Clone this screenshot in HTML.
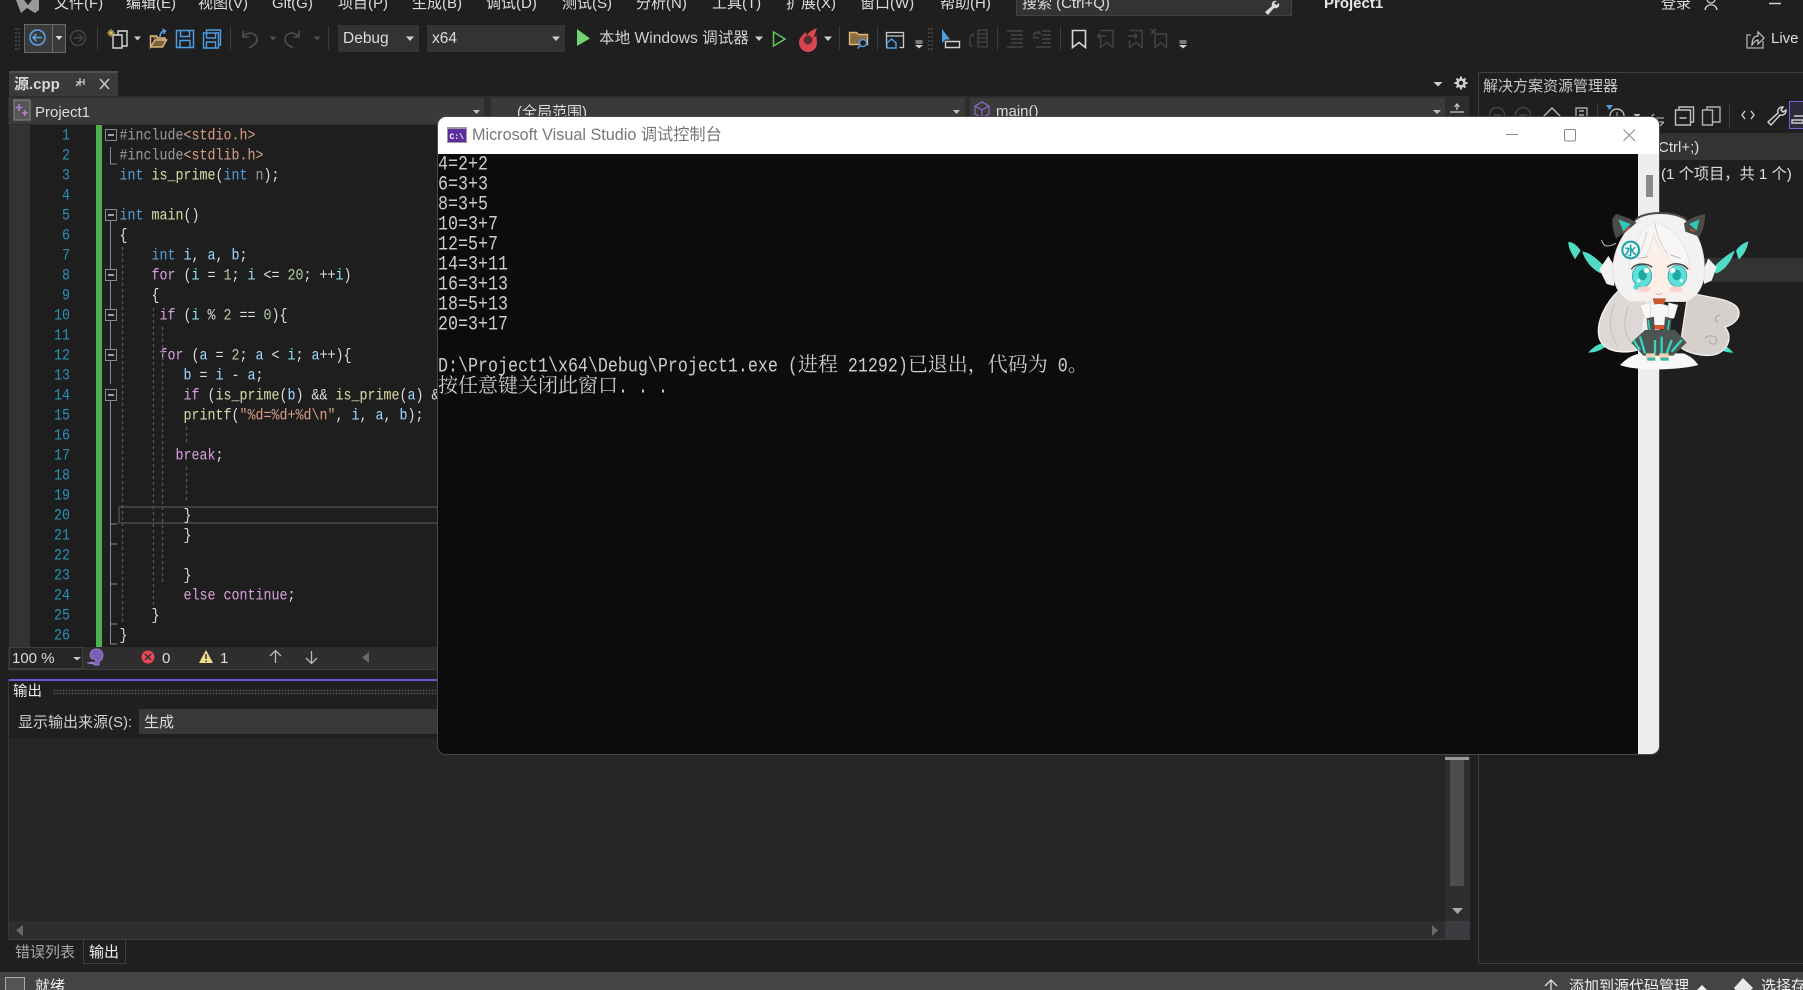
<!DOCTYPE html>
<html lang="zh-CN"><head><meta charset="utf-8"><title>Visual Studio</title>
<style>
html,body{margin:0;padding:0;background:#1f1f1f}
#p{position:relative;width:1803px;height:990px;overflow:hidden;background:#1f1f1f;font-family:"Liberation Sans","Noto Sans CJK SC",sans-serif;font-size:15px;color:#dcdcdc}
.t{position:absolute;white-space:nowrap;line-height:20px}
.b{position:absolute}
.c{position:absolute;left:119.5px;margin-top:2px;white-space:pre;font-family:"Liberation Mono","Noto Sans CJK SC",monospace;font-size:13.33px;line-height:20px;height:20px;color:#dcdcdc;transform:scaleY(1.15)}
.n{position:absolute;right:1733px;margin-top:2px;font-family:"Liberation Mono",monospace;font-size:13.33px;line-height:20px;color:#2b91af;transform:scaleY(1.15)}
.k{color:#569cd6}.f{color:#dcdcaa}.w{color:#d8a0df}.v{color:#9cdcfe}.u{color:#b5cea8}.s{color:#d69d85}.g{color:#9b9b9b}
#con{position:absolute;left:438px;top:117px;width:1221px;height:637px;background:#0c0c0c;border-radius:8px;overflow:hidden;box-shadow:0 0 0 1px #4a4a4a}
#con .l{position:absolute;left:0;height:20px;line-height:20px;white-space:pre;color:#cccccc;font-family:"Liberation Mono",monospace;font-size:16.67px}
#con .l i{font-style:normal;display:inline-block;transform:scaleY(1.2)}
#con .l b{font-weight:400;font-family:"Noto Serif CJK SC","Noto Sans CJK SC",serif;font-size:20px;line-height:20px}
</style></head><body><div id="p">

<!-- menu -->
<div class="t" style="left:54px;top:-6px">文件(F)</div>
<div class="t" style="left:126px;top:-6px">编辑(E)</div>
<div class="t" style="left:198px;top:-6px">视图(V)</div>
<div class="t" style="left:272px;top:-6px">Git(G)</div>
<div class="t" style="left:338px;top:-6px">项目(P)</div>
<div class="t" style="left:412px;top:-6px">生成(B)</div>
<div class="t" style="left:486px;top:-6px">调试(D)</div>
<div class="t" style="left:562px;top:-6px">测试(S)</div>
<div class="t" style="left:636px;top:-6px">分析(N)</div>
<div class="t" style="left:712px;top:-6px">工具(T)</div>
<div class="t" style="left:786px;top:-6px">扩展(X)</div>
<div class="t" style="left:860px;top:-6px">窗口(W)</div>
<div class="t" style="left:940px;top:-6px">帮助(H)</div>
<div class="b" style="left:1016px;top:-2px;width:276px;height:18px;background:#333;border:1px solid #434346;box-sizing:border-box"></div>
<div class="t" style="left:1022px;top:-6px">搜索 (Ctrl+Q)</div>
<div class="t" style="left:1324px;top:-6px;font-weight:700;color:#e8e8e8">Project1</div>
<div class="t" style="left:1661px;top:-6px">登录</div>

<!-- toolbar boxes -->
<div class="b" style="left:24px;top:24px;width:42px;height:29px;background:#3a3a3a;border:1px solid #6a6a6a;box-sizing:border-box"></div>
<div class="b" style="left:338px;top:25px;width:81px;height:27px;background:#333"></div>
<div class="t" style="left:343px;top:29px;font-size:15.5px">Debug</div>
<div class="b" style="left:427px;top:25px;width:138px;height:27px;background:#333"></div>
<div class="t" style="left:432px;top:29px;font-size:15.5px">x64</div>
<div class="t" style="left:599px;top:29px;font-size:15.6px;color:#d0d0d0">本地 Windows 调试器</div>
<div class="t" style="left:1771px;top:29px">Live Share</div>

<!-- tab -->
<div class="b" style="left:9px;top:71px;width:109px;height:25px;background:#3a3a3a;border-top:2px solid #505050;box-sizing:border-box"></div>
<div class="t" style="left:14px;top:75px;font-weight:700;color:#d8d8d8">源.cpp</div>

<!-- nav bar -->
<div class="b" style="left:8px;top:96px;width:1461px;height:29px;background:#2d2d2d"></div>
<div class="b" style="left:9px;top:98px;width:475px;height:26px;background:#3a3a3a"></div>
<div class="b" style="left:491px;top:98px;width:474px;height:26px;background:#3a3a3a"></div>
<div class="b" style="left:970px;top:98px;width:475px;height:26px;background:#3a3a3a"></div>
<div class="t" style="left:35px;top:103px">Project1</div>
<div class="t" style="left:517px;top:103px">(全局范围)</div>
<div class="t" style="left:996px;top:102px">main()</div>

<!-- editor -->
<div class="b" style="left:8px;top:125px;width:1437px;height:522px;background:#1e1e1e"></div>
<div class="b" style="left:9px;top:125px;width:21px;height:522px;background:#333"></div>
<div class="b" style="left:96px;top:125px;width:6px;height:522px;background:#4caf50"></div>
<div class="b" style="left:118px;top:506px;width:1330px;height:18px;border:2px solid #3f3f3f;box-sizing:border-box"></div>

<div class="n" style="top:125px">1</div><div class="n" style="top:145px">2</div><div class="n" style="top:165px">3</div><div class="n" style="top:185px">4</div><div class="n" style="top:205px">5</div><div class="n" style="top:225px">6</div><div class="n" style="top:245px">7</div><div class="n" style="top:265px">8</div><div class="n" style="top:285px">9</div><div class="n" style="top:305px">10</div><div class="n" style="top:325px">11</div><div class="n" style="top:345px">12</div><div class="n" style="top:365px">13</div><div class="n" style="top:385px">14</div><div class="n" style="top:405px">15</div><div class="n" style="top:425px">16</div><div class="n" style="top:445px">17</div><div class="n" style="top:465px">18</div><div class="n" style="top:485px">19</div><div class="n" style="top:505px">20</div><div class="n" style="top:525px">21</div><div class="n" style="top:545px">22</div><div class="n" style="top:565px">23</div><div class="n" style="top:585px">24</div><div class="n" style="top:605px">25</div><div class="n" style="top:625px">26</div>

<div class="c" style="top:125px"><span class="g">#include</span><span class="s">&lt;stdio.h&gt;</span></div>
<div class="c" style="top:145px"><span class="g">#include</span><span class="s">&lt;stdlib.h&gt;</span></div>
<div class="c" style="top:165px"><span class="k">int</span> <span class="f">is_prime</span>(<span class="k">int</span> <span class="g">n</span>);</div>
<div class="c" style="top:205px"><span class="k">int</span> <span class="f">main</span>()</div>
<div class="c" style="top:225px">{</div>
<div class="c" style="top:245px">    <span class="k">int</span> <span class="v">i</span>, <span class="v">a</span>, <span class="v">b</span>;</div>
<div class="c" style="top:265px">    <span class="w">for</span> (<span class="v">i</span> = <span class="u">1</span>; <span class="v">i</span> &lt;= <span class="u">20</span>; ++<span class="v">i</span>)</div>
<div class="c" style="top:285px">    {</div>
<div class="c" style="top:305px">     <span class="w">if</span> (<span class="v">i</span> % <span class="u">2</span> == <span class="u">0</span>){</div>
<div class="c" style="top:345px">     <span class="w">for</span> (<span class="v">a</span> = <span class="u">2</span>; <span class="v">a</span> &lt; <span class="v">i</span>; <span class="v">a</span>++){</div>
<div class="c" style="top:365px">        <span class="v">b</span> = <span class="v">i</span> - <span class="v">a</span>;</div>
<div class="c" style="top:385px">        <span class="w">if</span> (<span class="f">is_prime</span>(<span class="v">b</span>) &amp;&amp; <span class="f">is_prime</span>(<span class="v">a</span>) &amp;&amp; <span class="v">b</span> + <span class="v">a</span> == <span class="v">i</span>){</div>
<div class="c" style="top:405px">        <span class="f">printf</span>(<span class="s">"%d=%d+%d\n"</span>, <span class="v">i</span>, <span class="v">a</span>, <span class="v">b</span>);</div>
<div class="c" style="top:445px">       <span class="w">break</span>;</div>
<div class="c" style="top:505px">        }</div>
<div class="c" style="top:525px">        }</div>
<div class="c" style="top:565px">        }</div>
<div class="c" style="top:585px">        <span class="w">else</span> <span class="w">continue</span>;</div>
<div class="c" style="top:605px">    }</div>
<div class="c" style="top:625px">}</div>

<!-- zoom strip -->
<div class="b" style="left:8px;top:647px;width:1437px;height:23px;background:#2e2e2e;border-bottom:1px solid #3f3f3f;box-sizing:border-box"></div>
<div class="b" style="left:9px;top:647px;width:74px;height:22px;background:#262626;border:1px solid #3f3f3f;box-sizing:border-box"></div>
<div class="t" style="left:12px;top:649px">100 %</div>
<div class="t" style="left:162px;top:649px">0</div>
<div class="t" style="left:220px;top:649px">1</div>

<!-- output panel -->
<div class="b" style="left:8px;top:679px;width:1462px;height:261px;background:#1f1f1f;border-left:1px solid #3a3a3a;box-sizing:border-box"></div>
<div class="b" style="left:9px;top:679px;width:1461px;height:2px;background:#6a57d5"></div>
<div class="t" style="left:13px;top:682px;font-size:14.5px;color:#e8e8e8">输出</div>
<div class="b" style="left:53px;top:689px;width:1392px;height:6px;background-image:radial-gradient(#4a4a4a 1px,transparent 1px);background-size:3px 3px"></div>
<div class="t" style="left:18px;top:713px;color:#d0d0d0">显示输出来源(S):</div>
<div class="b" style="left:139px;top:709px;width:1300px;height:25px;background:#383838"></div>
<div class="t" style="left:144px;top:713px">生成</div>
<div class="b" style="left:9px;top:738px;width:1436px;height:183px;background:#262626"></div>
<div class="b" style="left:1445px;top:738px;width:25px;height:183px;background:#2e2e2e"></div>
<div class="b" style="left:1445px;top:757px;width:24px;height:3px;background:#9a9a9a"></div>
<div class="b" style="left:1450px;top:760px;width:14px;height:126px;background:#4d4d4d"></div>
<div class="b" style="left:9px;top:921px;width:1436px;height:19px;background:#2e2e2e;border-bottom:1px solid #3f3f3f;box-sizing:border-box"></div>
<div class="b" style="left:1445px;top:921px;width:25px;height:19px;background:#3c3c40"></div>
<div class="b" style="left:83px;top:940px;width:43px;height:24px;border:1px solid #3f3f3f;border-top:0;box-sizing:border-box"></div>
<div class="t" style="left:15px;top:943px;color:#a8a8a8">错误列表</div>
<div class="t" style="left:89px;top:943px;color:#f0f0f0">输出</div>

<!-- solution explorer -->
<div class="b" style="left:1478px;top:72px;width:340px;height:892px;border:1px solid #3f3f3f;box-sizing:border-box;background:#1f1f1f"></div>
<div class="t" style="left:1483px;top:77px;color:#c8c8c8">解决方案资源管理器</div>
<div class="b" style="left:1479px;top:133px;width:324px;height:27px;background:#333"></div>
<div class="t" style="left:1658px;top:138px">Ctrl+;)</div>
<div class="t" style="left:1661px;top:165px;font-size:15.2px">(1 个项目，共 1 个)</div>
<div class="b" style="left:1479px;top:258px;width:324px;height:24px;background:#333"></div>
<div class="b" style="left:1789px;top:101px;width:14px;height:28px;background:#2c2c3c;border:1px solid #7c62d6;border-right:0;box-sizing:border-box"></div>

<!-- status bar -->
<div class="b" style="left:0;top:972px;width:1803px;height:18px;background:#444"></div>
<div class="b" style="left:5px;top:977px;width:20px;height:20px;background:#555;border:1px solid #aaa;box-sizing:border-box"></div>
<div class="t" style="left:35px;top:977px;color:#f0f0f0">就绪</div>
<div class="t" style="left:1569px;top:977px;color:#f0f0f0">添加到源代码管理</div>
<div class="t" style="left:1761px;top:977px;color:#f0f0f0">选择存储库</div>

<!-- icon layer -->
<svg class="b" style="left:0;top:0" width="1803" height="990" viewBox="0 0 1803 990" fill="none">
<!-- logo -->
<path d="M16 0 L21 13 L27 8 L35 13 L39 10 V0 H32 L28 5 L24 0 Z" fill="#9a9a9a"/>
<!-- grips -->
<path d="M16 28V50M19 28V50M929 28V50M932 28V50" stroke="#4a4a4a" stroke-width="1.500" stroke-dasharray="2 2"/>
<!-- back / forward -->
<circle cx="37.500" cy="37.500" r="7.500" stroke="#5aa5ea" stroke-width="1.500"/><path d="M42 37.500H33M36.500 34L33 37.500L36.500 41" stroke="#5aa5ea" stroke-width="1.500"/>
<path d="M55.500 36h7l-3.500 4z" fill="#ddd"/><path d="M52.500 25V52" stroke="#6a6a6a"/>
<circle cx="78" cy="38" r="7.500" stroke="#444" stroke-width="1.500"/><path d="M74 38H82M79 34.500L82.500 38L79 41.500" stroke="#444" stroke-width="1.500"/>
<path d="M97.500 26V50M230.500 26V50M328.500 26V50M839.500 26V50M877.500 26V50M997.500 26V50M1060.500 26V50" stroke="#3c3c3c"/>
<!-- new project -->
<path d="M113 35h9v13h-9zM118 35v-4h9v15h-5" stroke="#d8d8d8" stroke-width="1.400"/><path d="M111 29v8M107 33h8M108.500 30.500l5 5M113.500 30.500l-5 5" stroke="#e3c060" stroke-width="1"/>
<path d="M134 36.500h7l-3.500 4z" fill="#cfcfcf"/>
<!-- open -->
<path d="M150.500 36h6l1.500 2h7l0 2h-10l-4.500 7zM150.500 36v11h12l4-7h-11" stroke="#dcb67a" stroke-width="1.500" fill="#7a6340"/><path d="M160 37c0-4 2-6 5-6M162.500 29l3 2-2 3" stroke="#5aa5ea" stroke-width="1.500"/>
<!-- save -->
<path d="M176.500 30.500h17v17h-17zM180.500 30.500v6h9v-6M180 47.500v-7h10v7" stroke="#4d9de0" stroke-width="1.500"/>
<path d="M203.500 33h15v15h-15zM206.500 33v5h9v-5M206.500 48v-6h9v6M206.500 33v-3h14v15h-2" stroke="#4d9de0" stroke-width="1.400"/>
<!-- undo redo -->
<path d="M243 31v6h6M243 37c4-6 14-5 14 3c0 3-3 5-8 8" stroke="#4f4f4f" stroke-width="1.600"/>
<path d="M299 31v6h-6M299 37c-4-6-14-5-14 3c0 3 3 5 8 8" stroke="#4f4f4f" stroke-width="1.600"/>
<path d="M269.500 36.500h7l-3.500 4zM313.500 36.500h7l-3.500 4z" fill="#4f4f4f"/>
<!-- carets -->
<path d="M406 36.500h8l-4 4.500zM552 36.500h8l-4 4.500zM755 36.500h8l-4 4.500zM824 36.500h8l-4 4.500z" fill="#d0d0d0"/>
<!-- run -->
<path d="M577 29L590 38.500L577 46Z" fill="#6fd66f"/>
<path d="M773.500 32L785 39L773.500 46Z" stroke="#5fc95f" stroke-width="1.500"/>
<!-- flame -->
<path d="M817 28c-5 2-9 5-10 7-1-1-1-2-1-3-4 3-7 7-7 10 0 6 4 10 9 10s9-4 9-9c0-3-1-5 0-8-1 1-2 2-3 2 1-3 2-6 3-9z" fill="#d8474f"/><circle cx="808" cy="40" r="4.500" fill="#5d2a30"/>
<!-- folder find -->
<path d="M849.500 32.500h7l2 2h9v10h-18z" fill="#8a6f44" stroke="#dcb67a" stroke-width="1.400"/><circle cx="863" cy="43" r="3.500" stroke="#4d9de0" stroke-width="1.500" fill="#1f1f1f"/><path d="M860.500 45.500l-3 3" stroke="#4d9de0" stroke-width="1.500"/>
<!-- home cluster -->
<path d="M886.500 48v-15.500h17v15h-4M886.500 36h17" stroke="#c8c8c8" stroke-width="1.300"/><path d="M887 43l4.500-4 4.500 4v5h-9z" stroke="#4d9de0" stroke-width="1.500"/>
<path d="M915.500 41h7M915.500 43h7" stroke="#d0d0d0"/><path d="M915 45h8l-4 3.500z" fill="#d0d0d0"/>
<path d="M942 29v14l3.500-3.500 4.500 0z" fill="#4d9de0"/><path d="M945.500 41.500h14v6h-14z" stroke="#cfcfcf" stroke-width="1.400"/>
<path d="M970 37v9h3M970 37l3-3v3M978 30h9v17h-9zM978 34h9M978 38h9M978 42h9" stroke="#454545" stroke-width="1.300"/>
<path d="M1007 31h16M1011 35h12M1011 39h12M1011 43h12M1007 47h16" stroke="#454545" stroke-width="1.500"/>
<path d="M1042 31h9M1042 35h9M1042 39h9M1042 43h9M1036 47h15M1034 33h6l-2-2M1034 33v5h5" stroke="#454545" stroke-width="1.400"/>
<path d="M1072.500 30.500h13v17l-6.500-5-6.500 5z" stroke="#d8d8d8" stroke-width="1.600"/>
<path d="M1100.500 30.500h12.500v17l-6-5-6.500 5v-11M1098 36h8M1100 33.500l-2.500 2.500 2.500 2.500" stroke="#454545" stroke-width="1.400"/>
<path d="M1129.500 30.500h12.500v17l-6-5-6.500 5v-7M1128 36h9M1134.500 33.500l2.500 2.500-2.500 2.500" stroke="#454545" stroke-width="1.400"/>
<path d="M1155 34h11.500v13.500l-5.500-5-6 5zM1151 29l5 5M1156 29l-5 5" stroke="#454545" stroke-width="1.400"/>
<path d="M1179.500 41h7M1179.500 43h7" stroke="#d0d0d0"/><path d="M1179 45h8l-4 3.500z" fill="#d0d0d0"/>
<!-- live share -->
<path d="M1751 35h-4v13h16v-7" stroke="#b0b0b0" stroke-width="1.300"/><path d="M1752 45c0-6 2-9 6-9v-4l6 6-6 6v-4c-2 0-4 2-6 5z" stroke="#c8c8c8" stroke-width="1.200"/>
<!-- top right -->
<circle cx="1711" cy="-1" r="4" stroke="#d0d0d0" stroke-width="1.300"/><path d="M1705 10c1-7 11-7 12 0" stroke="#d0d0d0" stroke-width="1.300"/>
<path d="M1769 3.500H1781" stroke="#d0d0d0" stroke-width="1.500"/>
<path d="M1277 1c-4-1-6 2-5 5l-7 6 3 3 6-7c3 1 6-1 5-5l-3 2-2-2z" fill="#d8d8d8"/>
<!-- tab icons -->
<path d="M80 78v8M76 82h8M84 79v6M76 86l3-3" stroke="#c8c8c8" stroke-width="1.300"/>
<path d="M100 79l9 10M109 79l-9 10" stroke="#cfcfcf" stroke-width="1.400"/>
<path d="M1433.500 82h9l-4.500 4.500z" fill="#d0d0d0"/>
<circle cx="1461" cy="83" r="3.500" stroke="#d0d0d0" stroke-width="2.600"/><path d="M1461 76.500v13M1454.500 83h13M1456.500 78.500l9 9M1465.500 78.500l-9 9" stroke="#d0d0d0" stroke-width="2" stroke-dasharray="2.500 8" stroke-dashoffset="0"/>
<!-- nav icons -->
<rect x="14" y="100" width="16" height="20" fill="#555" stroke="#8a8a8a"/><path d="M19 104v7M15.500 107.500h7M25 110v6M22 113h6" stroke="#b180d7" stroke-width="1.600"/>
<path d="M473 110h7l-3.500 4zM953 110h7l-3.500 4zM1433 110h8l-4 4z" fill="#c0c0c0"/>
<path d="M975 106l7-4 7 4v8l-7 4-7-4zM975 106l7 4 7-4M982 110v8" stroke="#8a64b8" stroke-width="1.300"/>
<path d="M1450 112h14M1450 117h14M1457 104v6M1454.500 107l2.500-3 2.500 3M1457 125v-6" stroke="#c8c8c8" stroke-width="1.300"/>
<!-- fold margin -->
<g stroke="#8a8a8a" stroke-width="1">
<path d="M110.500 147V164H117M110.500 217V384M110.500 396V644H117M110.500 524H117M110.500 544H117M110.500 584H117M110.500 624H117"/>
<g fill="#1e1e1e">
<rect x="105.500" y="129.500" width="11" height="11"/><rect x="105.500" y="209.500" width="11" height="11"/><rect x="105.500" y="269.500" width="11" height="11"/><rect x="105.500" y="309.500" width="11" height="11"/><rect x="105.500" y="349.500" width="11" height="11"/><rect x="105.500" y="389.500" width="11" height="11"/>
</g>
</g>
<path d="M108 135h6M108 215h6M108 275h6M108 315h6M108 355h6M108 395h6" stroke="#d0d0d0" stroke-width="1.400"/>
<!-- indent guides -->
<path d="M122.500 247V623M153.500 308V607M162.500 327V582M186.500 427V445M186.500 467V502" stroke="#5a5a5a" stroke-width="1.200" stroke-dasharray="3 3"/>
<!-- zoom row -->
<path d="M73 657h8l-4 3.500z" fill="#c8c8c8"/>
<path d="M88 663c6 2 8-1 8-3l-2-1c-3 0-5-3-3-7 2-4 9-4 11 0 2 4 0 9-3 9v4l-5 0-1-3z" fill="#7a5fb8" stroke="#9a80d0"/>
<circle cx="148" cy="657" r="6.500" fill="#e84855"/><path d="M145 654l6 6M151 654l-6 6" stroke="#333" stroke-width="1.500"/>
<path d="M206 650l7 13h-14z" fill="#f0dc8c"/><path d="M206 654v5M206 660.500v1.500" stroke="#333" stroke-width="1.500"/>
<path d="M275.500 663V651M270 656l5.500-5.500L281 656M311.500 651V663M306 658l5.500 5.500L317 658" stroke="#b8b8b8" stroke-width="1.300"/>
<path d="M369 652v11l-7-5.500z" fill="#6a6a6a"/>
<!-- output scroll arrows -->
<path d="M23 925v11l-7-5.500z" fill="#6a6a6a"/>
<path d="M1432 925v11l6-5.500z" fill="#6a6a6a"/>
<path d="M1452 908h11l-5.500 6z" fill="#a8a8a8"/>
<!-- solution toolbar -->
<circle cx="1497" cy="115" r="7.500" stroke="#444" stroke-width="1.400"/><circle cx="1523" cy="115" r="7.500" stroke="#444" stroke-width="1.400"/>
<path d="M1493 115h8M1519 115h8" stroke="#444" stroke-width="1.400"/>
<path d="M1543 117l9-9 9 9" stroke="#b8b8b8" stroke-width="1.400"/>
<path d="M1576 108h11v18h-11zM1579 111h5M1579 115h5" stroke="#a8a8a8" stroke-width="1.400"/>
<path d="M1597.500 103V128" stroke="#3c3c3c"/>
<path d="M1606 105h7l-3.500 5z" fill="#4d9de0"/><circle cx="1617" cy="116" r="7" stroke="#b8b8b8" stroke-width="1.400"/><path d="M1617 112v4l3 2" stroke="#b8b8b8"/>
<path d="M1633.500 114h7l-3.500 4z" fill="#c0c0c0"/>
<path d="M1650 118h14M1654 114l-4 4M1650 122h14M1660 126l4-4" stroke="#a8a8a8" stroke-width="1.300"/>
<path d="M1675.500 110h15v15h-15zM1679 110v-3h14.500v15h-3M1679.500 118h7" stroke="#c0c0c0" stroke-width="1.400"/>
<path d="M1702.500 110h10v15h-10zM1707 110v-3h13v15h-7.500" stroke="#b0b0b0" stroke-width="1.400"/>
<path d="M1729.500 103V128" stroke="#3c3c3c"/>
<path d="M1745 111l-3 4 3 4M1751 111l3 4-3 4" stroke="#d8d8d8" stroke-width="1.300"/>
<path d="M1783 107c-4 0-6 3-5 6l-10 9 3 3 9-10c3 1 6-1 6-5l-3 2-2-2z" stroke="#d8d8d8" stroke-width="1.400"/>
<path d="M1792 120h11v3h-11zM1794 116h9" stroke="#cfcfcf" stroke-width="1.400"/>
<!-- status bar -->
<path d="M1551 990V980M1545 986l6-6 6 6" stroke="#e0e0e0" stroke-width="1.300"/>
<path d="M1697 990l5-5 5 5z" fill="#f0f0f0"/>
<path d="M1743 978l10 10-4 4h-12l-3-4z" fill="#e8e8e8"/>
</svg>

<!-- console -->
<div id="con">
<div class="b" style="left:0;top:0;width:1221px;height:37px;background:#fff"></div>
<svg class="b" style="left:9px;top:10px" width="20" height="16"><rect width="20" height="16" fill="#9a9a9a"/><rect x="1" y="2" width="18" height="13" fill="#5b2d9e"/><text x="2.500" y="12" font-size="8" font-weight="700" font-family="Liberation Mono" fill="#fff">C:\</text></svg>
<div class="t" style="left:34px;top:8px;color:#777;font-size:16.2px">Microsoft Visual Studio 调试控制台</div>
<svg class="b" style="left:1060px;top:0" width="161" height="37" fill="none"><path d="M8 17.500H20" stroke="#888"/><rect x="66.500" y="12.500" width="11" height="11.500" rx="1.500" stroke="#888"/><path d="M125.500 12.500L137 24M137 12.500L125.500 24" stroke="#888"/></svg>
<div class="b" style="left:1200px;top:37px;width:21px;height:600px;background:#eeeeee"></div>
<div class="b" style="left:1208px;top:58px;width:7px;height:22px;background:#8a8a8a"></div>
<div class="l" style="top:39px"><i>4=2+2</i></div>
<div class="l" style="top:59px"><i>6=3+3</i></div>
<div class="l" style="top:79px"><i>8=3+5</i></div>
<div class="l" style="top:99px"><i>10=3+7</i></div>
<div class="l" style="top:119px"><i>12=5+7</i></div>
<div class="l" style="top:139px"><i>14=3+11</i></div>
<div class="l" style="top:159px"><i>16=3+13</i></div>
<div class="l" style="top:179px"><i>18=5+13</i></div>
<div class="l" style="top:199px"><i>20=3+17</i></div>
<div class="l" style="top:236px"><i>D:\Project1\x64\Debug\Project1.exe (</i><b>进程</b><i> 21292)</i><b>已退出，代码为</b><i> 0</i><b>。</b></div>
<div class="l" style="top:257px"><b>按任意键关闭此窗口</b><i>. . .</i></div>
</div>

<!-- mascot -->
<svg class="b" style="left:1540px;top:190px" width="263" height="200" viewBox="0 0 789 600">
<!-- wings -->
<path d="M85 156C100 155 115 170 122 182L105 208C95 190 85 175 85 156Z" fill="#4fdcc4"/>
<path d="M127 185C145 185 170 205 192 228L182 250C160 240 135 215 127 185Z" fill="#4fdcc4"/>
<path d="M625 154C610 158 595 170 588 182L596 208C612 195 622 175 625 154Z" fill="#4fdcc4"/>
<path d="M584 181C560 195 535 215 516 238L528 250C550 245 575 215 584 181Z" fill="#4fdcc4"/>
<path d="M178 238L205 198L225 230L222 288L200 282Z" fill="#f2f2f2"/>
<path d="M530 232L505 205L490 240L492 282L515 272Z" fill="#f2f2f2"/>
<path d="M145 488C160 470 175 462 195 458L198 470C180 482 165 488 145 488Z" fill="#4fdcc4"/>
<path d="M580 488C565 472 555 465 545 462L540 478C552 485 565 488 580 488Z" fill="#4fdcc4"/>
<!-- base -->
<path d="M240 525C265 500 280 495 300 490L430 490C450 497 465 510 475 525C420 540 290 545 240 525Z" fill="#f7f7f7"/>
<!-- long hair -->
<path d="M445 305C490 325 560 320 590 350C608 375 590 400 555 412C580 440 565 485 520 495C490 500 440 490 420 470Z" fill="#d6d0cc" stroke="#f0eeed" stroke-width="4"/>
<path d="M540 375C525 378 520 390 535 398M495 445C510 430 535 440 530 455C525 468 505 462 510 450" stroke="#a89e9a" stroke-width="2.500" fill="none"/>
<path d="M238 300C200 335 165 395 178 445C195 490 255 492 300 478L320 330Z" fill="#ddd8d5" stroke="#f5f5f5" stroke-width="4"/>
<path d="M225 340C205 380 205 430 235 470M265 350C245 400 255 440 280 465" stroke="#bdb3ae" stroke-width="2" fill="none"/>
<!-- head hair -->
<path d="M295 85C325 62 400 62 435 90C480 130 500 195 492 265C485 300 465 325 440 335L270 335C240 320 222 290 218 250C215 190 245 125 295 85Z" fill="#f3f2f1" stroke="#d9d2ce" stroke-width="1.500"/>
<!-- face -->
<path d="M272 240C275 290 310 322 358 322C405 322 442 290 446 240C446 210 400 175 355 175C310 175 272 210 272 240Z" fill="#fbefe8"/>
<path d="M268 238C300 225 330 190 342 130C355 190 395 225 450 238C445 180 420 120 345 95C300 115 270 175 268 238Z" fill="#f7f6f5" stroke="#d8cfc9" stroke-width="1.500"/>
<path d="M345 100C350 140 365 170 385 195M320 125C315 155 305 180 290 205" stroke="#c9bfb9" stroke-width="2" fill="none"/>
<path d="M185 150C190 172 205 172 228 160" stroke="#cbbeb8" stroke-width="3" fill="none"/>
<!-- eyes -->
<ellipse cx="306" cy="258" rx="29" ry="33" fill="#5fe0d8" stroke="#2a8f95" stroke-width="2"/>
<ellipse cx="412" cy="258" rx="28" ry="32" fill="#5fe0d8" stroke="#2a8f95" stroke-width="2"/>
<ellipse cx="308" cy="255" rx="13" ry="16" fill="#1fa8a8"/><ellipse cx="410" cy="255" rx="13" ry="16" fill="#1fa8a8"/>
<circle cx="320" cy="242" r="8" fill="#fff"/><circle cx="398" cy="242" r="8" fill="#fff"/><circle cx="296" cy="272" r="5" fill="#d8fff9"/><circle cx="424" cy="272" r="5" fill="#d8fff9"/>
<path d="M274 238C285 218 320 218 336 232M382 232C398 216 430 218 444 238" stroke="#4a4644" stroke-width="4.500" fill="none"/>
<path d="M295 205l30-5M392 195l30 10" stroke="#a8988e" stroke-width="2"/>
<ellipse cx="312" cy="298" rx="20" ry="9" fill="#fbd3d2"/><ellipse cx="408" cy="298" rx="20" ry="9" fill="#fbd3d2"/>
<path d="M347 310c6 5 12 5 18 0" stroke="#c89080" stroke-width="2" fill="none"/>
<circle cx="288" cy="291" r="8" fill="#4dd9cf"/>
<!-- ears -->
<path d="M217 85L228 72C250 78 270 85 290 98L252 130L228 145C220 125 216 105 217 85Z" fill="#4b4b48"/>
<path d="M495 72C470 78 450 85 432 100L436 125L478 140C490 120 496 95 495 72Z" fill="#4b4b48"/>
<path d="M235 88L272 102L250 124Z" fill="#2fc9b8"/><path d="M478 88L447 102L470 122Z" fill="#2fc9b8"/>
<path d="M255 122l15-10M450 118l14 6" stroke="#d5562c" stroke-width="4"/>
<path d="M285 90C315 62 405 62 440 90" stroke="#4b4b48" stroke-width="6" fill="none"/>
<!-- badge -->
<circle cx="272" cy="180" r="25" fill="#f4f4f4" stroke="#19a1a8" stroke-width="6"/>
<text x="272" y="195" text-anchor="middle" font-size="36" font-weight="700" fill="#19a1a8" font-family="Noto Sans CJK SC,sans-serif">水</text>
<!-- body -->
<path d="M338 325H378L370 350H345Z" fill="#c9572d"/>
<path d="M332 348C345 340 370 340 385 348L390 410H325Z" fill="#f6f6f6"/>
<path d="M300 345L332 338L332 385L315 385ZM414 345L385 338L385 385L402 385Z" fill="#f8f8f8" stroke="#c0b6b0" stroke-width="1"/>
<path d="M335 405H385L380 418H340Z" fill="#d5562c"/>
<path d="M320 385L342 380L345 440L325 440ZM395 385L375 380L370 440L390 440Z" fill="#4a5450"/>
<path d="M325 390L332 440M388 390L380 440" stroke="#30cdb8" stroke-width="5"/>
<path d="M315 420H405L440 458L400 497H310L274 458Z" fill="#4c5551"/>
<path d="M280 450L300 480M300 440L315 490M345 450V490M365 440V490M395 450L380 490M425 450L395 485" stroke="#35d6bf" stroke-width="7"/>
<path d="M318 490h28v18h-28zM358 490h28v18h-28z" fill="#f4d2b8"/>
<path d="M322 503h24v9h-24zM362 503h24v9h-24z" fill="#2fb9a6"/>
</svg>

</div></body></html>
